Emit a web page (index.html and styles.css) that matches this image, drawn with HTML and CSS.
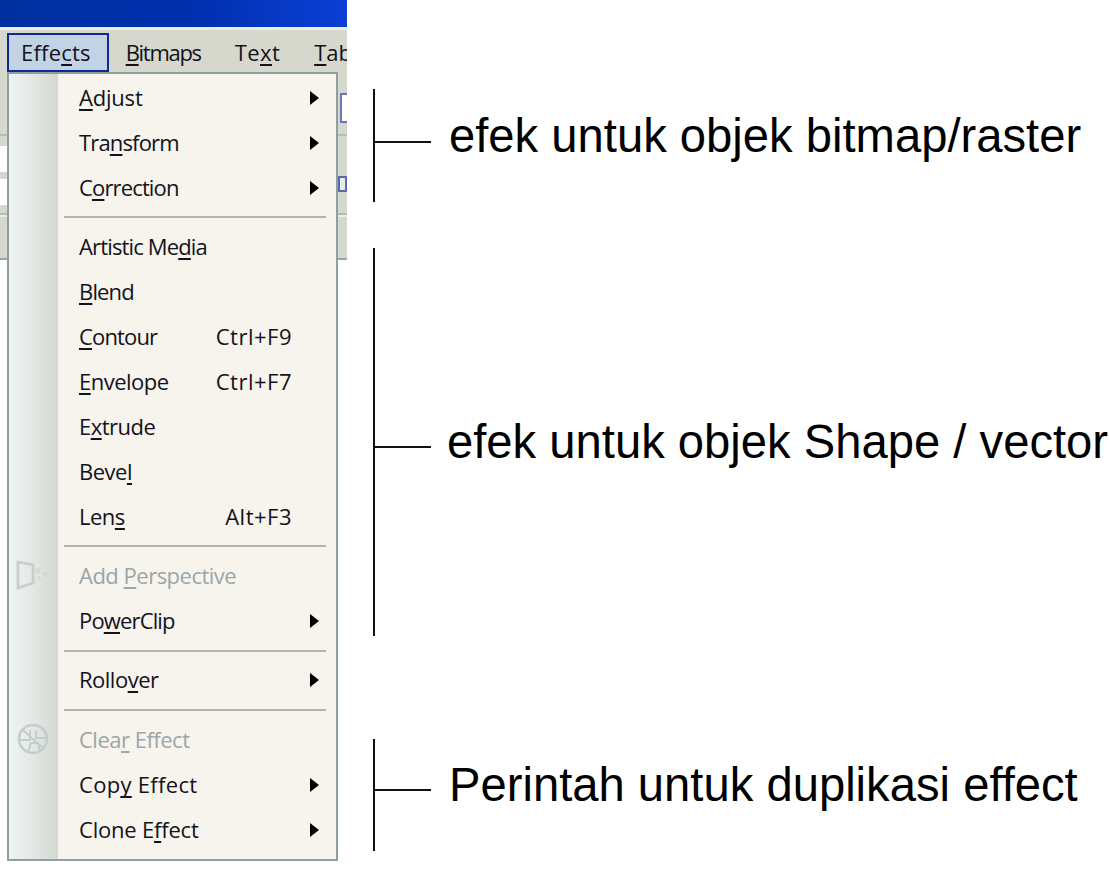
FILE: index.html
```html
<!DOCTYPE html>
<html lang="id">
<head>
<meta charset="utf-8">
<title>Effects menu</title>
<link rel="stylesheet" href="styles.css">
</head>
<body>
<div class="page">
  <div class="app">
    <div class="titlebar"></div>
    <nav class="menubar">
      <span class="top active">Effe<u>c</u>ts</span>
      <span class="top top-bitmaps"><u>B</u>itmaps</span>
      <span class="top top-text">Te<u>x</u>t</span>
      <span class="top"><u>T</u>able</span>
    </nav>
    <div class="toolbars">
      <div class="tb tb-a"><span class="pic pic-a"></span></div>
      <div class="tb tb-b">
        <span class="field"></span>
        <span class="pic pic-b"></span>
        <span class="field"></span>
      </div>
      <div class="tb tb-c"></div>
    </div>
    <div class="menu">
      <div class="row"><span class="ico"></span><span class="label norm"><u>A</u>djust</span><span class="arrow"></span></div>
      <div class="row"><span class="ico"></span><span class="label tight">Tra<u>n</u>sform</span><span class="arrow"></span></div>
      <div class="row"><span class="ico"></span><span class="label tight">C<u>o</u>rrection</span><span class="arrow"></span></div>
      <div class="sep"></div>
      <div class="row"><span class="ico"></span><span class="label tight">Artistic Me<u>d</u>ia</span></div>
      <div class="row"><span class="ico"></span><span class="label tight"><u>B</u>lend</span></div>
      <div class="row"><span class="ico"></span><span class="label tight"><u>C</u>ontour</span><span class="key">Ctrl+F9</span></div>
      <div class="row"><span class="ico"></span><span class="label"><u>E</u>nvelope</span><span class="key">Ctrl+F7</span></div>
      <div class="row"><span class="ico"></span><span class="label">E<u>x</u>trude</span></div>
      <div class="row"><span class="ico"></span><span class="label">Beve<u>l</u></span></div>
      <div class="row"><span class="ico"></span><span class="label">Len<u>s</u></span><span class="key">Alt+F3</span></div>
      <div class="sep"></div>
      <div class="row off">
        <span class="ico">
          <svg width="36" height="30" viewBox="0 0 36 30" fill="none" stroke="#c6cfcd" stroke-width="2.8">
            <path d="M2 2 L17 5 V23 L2 28 Z"/>
            <path d="M20 8 L24 13 M24 8 L20 13 M22 16 L25 20 M29 11 V17 M26 14 H33" stroke-width="1.8" stroke="#d0d7d4"/>
          </svg>
        </span>
        <span class="label">Add <u>P</u>erspective</span>
      </div>
      <div class="row"><span class="ico"></span><span class="label tight">Po<u>w</u>erClip</span><span class="arrow"></span></div>
      <div class="sep sep-low"></div>
      <div class="row"><span class="ico"></span><span class="label">Rollo<u>v</u>er</span><span class="arrow"></span></div>
      <div class="sep sep-wide"></div>
      <div class="row off">
        <span class="ico">
          <svg width="34" height="34" viewBox="0 0 34 34" fill="none" stroke="#c3cdcb" stroke-width="2.6">
            <circle cx="17" cy="17" r="14"/>
            <path d="M7 8 L27 26" stroke-width="2.2"/>
            <path d="M4 18 H14 V8 M20 9 V16 H30 M12 30 L15 21 H22 L24 30" stroke-width="2"/>
          </svg>
        </span>
        <span class="label">Clea<u>r</u> Effect</span>
      </div>
      <div class="row"><span class="ico"></span><span class="label wide">Cop<u>y</u> Effect</span><span class="arrow"></span></div>
      <div class="row"><span class="ico"></span><span class="label norm">Clone E<u>f</u>fect</span><span class="arrow"></span></div>
    </div>
  </div>
  <div class="notes">
    <div class="note note-1"><span class="tick"></span><span class="note-text">efek untuk objek bitmap/raster</span></div>
    <div class="note note-2"><span class="tick"></span><span class="note-text">efek untuk objek Shape / vector</span></div>
    <div class="note note-3"><span class="tick"></span><span class="note-text">Perintah untuk duplikasi effect</span></div>
  </div>
</div>
</body>
</html>
```
FILE: styles.css
```css
* { box-sizing: border-box; }
html, body { margin: 0; padding: 0; background: #fff; }
body { width: 1109px; height: 871px; overflow: hidden; }
u { text-decoration-thickness: 2px; text-underline-offset: 3px; text-decoration-skip-ink: none; }

.page { display: flex; align-items: flex-start; height: 871px; }

.app { position: relative; width: 347px; height: 871px; flex: none; overflow: hidden; font-family: "Open Sans", "Noto Sans", sans-serif; font-size: 22px; color: #12121c; }

.titlebar { height: 27px; background: linear-gradient(to right, #00309f, #0030ae 55%, #0b3fd6); }

.menubar { display: flex; height: 45px; padding-left: 7px; border-top: 3px solid #eceee6; background: #d6d8ce; white-space: nowrap; }
.top { display: flex; align-items: center; padding: 0 17px 2px; margin-top: 3px; }
.top.active { border: 2px solid #0b2c8e; background: #c3d3e6; padding: 0 16px 2px 12px; letter-spacing: 0.2px; }
.top-bitmaps { letter-spacing: -1.3px; }
.top-text { letter-spacing: 0.4px; }

.toolbars { display: flex; flex-direction: column; }
.tb { background: #d6d8ce; }
.tb-a { height: 64px; border-bottom: 2px solid #b8bdb5; position: relative; }
.tb-b { height: 79px; border-bottom: 2px solid #b5bab2; display: flex; flex-direction: column; gap: 7px; padding-top: 10px; position: relative; }
.tb-c { height: 45px; border-bottom: 2px solid #9ba5a1; border-top: 2px solid #eceee6; }
.field { display: block; width: 60px; height: 26px; background: #fff; }
.pic { position: absolute; left: 340px; }
.pic-a { top: 21px; width: 12px; height: 30px; background: #fff; border: 2px solid #6a78b4; }
.pic-b { left: 338px; top: 40px; width: 9px; height: 16px; background: #e8ecf2; border: 2px solid #5c6aa8; }

.menu {
  position: absolute; left: 7px; top: 72px; width: 331px; height: 789px;
  border: 2px solid #8fa09f;
  background: linear-gradient(to right, #eff3f2 0, #e6eae7 20px, #d3d8d1 49px, #f6f4ec 49px);
}
.row { display: flex; align-items: center; height: 45px; padding-right: 17px; }
.ico { flex: none; width: 70px; height: 45px; display: flex; align-items: center; padding-left: 7px; }
.label { flex: 1; letter-spacing: -0.5px; white-space: nowrap; }
.label.norm { letter-spacing: -0.2px; }
.label.tight { letter-spacing: -0.85px; }
.label.wide { letter-spacing: 0.3px; }
.key { padding-right: 27px; letter-spacing: 0.5px; white-space: nowrap; }
.arrow { width: 0; height: 0; margin-top: 2px; border-left: 9px solid #000; border-top: 7px solid transparent; border-bottom: 7px solid transparent; }
.off { color: #9aa6aa; }
.sep { height: 14px; margin-left: 55px; margin-right: 10px; padding-top: 2px; display: flex; align-items: center; }
.sep::before { content: ""; flex: 1; height: 2px; background: #abb6b1; }
.sep-low { padding-top: 4px; }
.sep-wide { height: 15px; }

.notes { margin-left: 26px; padding-top: 89px; display: flex; flex-direction: column; font-family: "Liberation Sans", Arial, sans-serif; font-size: 47.2px; color: #000; white-space: nowrap; }
.note { display: flex; align-items: center; border-left: 2px solid #111; }
.note-1 { height: 113px; padding-bottom: 8px; }
.note-2 { height: 388px; margin-top: 46px; padding-top: 10px; }
.note-3 { height: 112px; margin-top: 103px; padding-bottom: 10px; }
.tick { flex: none; width: 56px; height: 2px; background: #111; margin-right: 18px; }
.note-2 .tick { margin-right: 16px; }
.note-text { position: relative; top: -6px; }
```
